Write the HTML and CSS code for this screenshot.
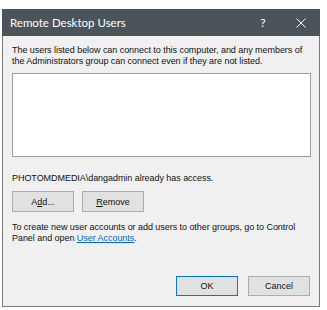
FILE: index.html
```html
<!DOCTYPE html>
<html lang="en">
<head>
    <meta charset="UTF-8">
    <title>Remote Desktop Users</title>
    <link rel="stylesheet" href="styles.css">
</head>
<body>
    <div class="dialog">
        <div class="titlebar">
            <span class="title">Remote Desktop Users</span>
            <span class="help">?</span>
            <span class="close">
                <svg width="10" height="10" viewBox="0 0 10 10">
                    <path d="M0.5 0.5 L9.5 9.5 M9.5 0.5 L0.5 9.5" stroke="#fff" stroke-width="1" fill="none"/>
                </svg>
            </span>
        </div>

        <div class="content">
            <p class="intro">The users listed below can connect to this computer, and any members of the Administrators group can connect even if they are not listed.</p>

            <div class="userlist"></div>

            <p class="access">PHOTOMDMEDIA\dangadmin already has access.</p>

            <div class="row">
                <button class="btn">A<u>d</u>d...</button>
                <button class="btn"><u>R</u>emove</button>
            </div>

            <p class="info">To create new user accounts or add users to other groups, go to Control Panel and open <a href="#">User Accounts</a>.</p>

            <div class="footer">
                <button class="btn btn-default">OK</button>
                <button class="btn">Cancel</button>
            </div>
        </div>
    </div>
</body>
</html>
```

FILE: styles.css
```css
body, html {
    margin: 0;
    padding: 0;
    background-color: white;
    font-family: 'Liberation Sans', Arial, sans-serif;
    color: #111;
}

.dialog {
    margin: 9px 0 0 2px;
    width: 318px;
    height: 298px;
    box-sizing: border-box;
    background-color: #f0f0f0;
    border: 1px solid #7a7a7a;
    border-top: none;
    display: flex;
    flex-direction: column;
}

.titlebar {
    height: 27px;
    background-color: #4b5459;
    color: #fff;
    display: flex;
    align-items: center;
    padding-left: 8px;
    margin: 0 -1px;
    font-family: Lato, 'Open Sans', sans-serif;
    font-size: 11.5px;
}

.title { flex: 1; }

.help {
    width: 38px;
    text-align: center;
    font-size: 12px;
}

.close {
    width: 38px;
    display: flex;
    justify-content: center;
}

.content {
    flex: 1;
    padding: 9px 6px 0 9px;
    font-size: 9px;
    line-height: 11px;
    display: flex;
    flex-direction: column;
}

.content p {
    margin: 0;
    letter-spacing: -0.05px;
}

.userlist {
    height: 84px;
    margin-top: 6px;
    width: 299px;
    box-sizing: border-box;
    background-color: #fff;
    border: 1px solid #9c9c9c;
}

.access { margin-top: 16px !important; }

.row {
    display: flex;
    gap: 8px;
    margin-top: 7px;
}

.btn {
    font-family: 'Liberation Sans', Arial, sans-serif;
    font-size: 9px;
    color: #111;
    background-color: #e1e1e1;
    border: 1px solid #adadad;
    height: 21px;
    width: 62px;
    padding: 0;
}

.info { margin-top: 10px !important; }

.info a {
    color: #0066cc;
    text-decoration: underline;
}

.footer {
    display: flex;
    justify-content: flex-end;
    gap: 10px;
    margin-top: auto;
    margin-bottom: 10px;
    margin-right: 3px;
}

.footer .btn { height: 20px; }

.btn-default {
    border-color: #0078d7;
}
```
